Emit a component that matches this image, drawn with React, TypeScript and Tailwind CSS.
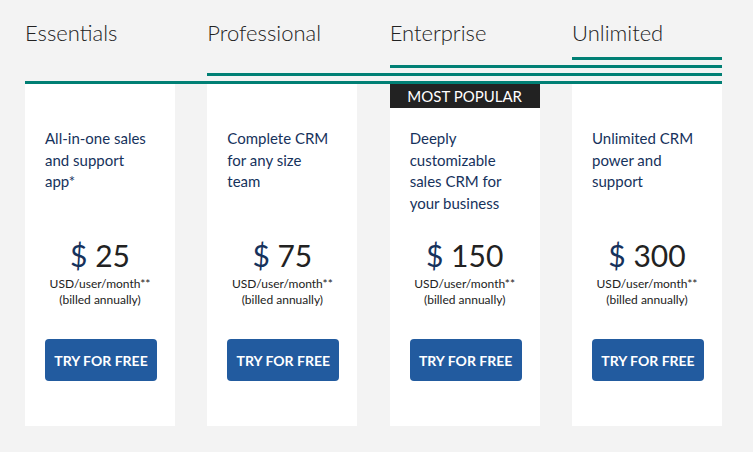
import React from "react";

const plans = [
    { name: "Essentials", lines: ["All-in-one sales", "and support", "app*"], price: "25" },
    { name: "Professional", lines: ["Complete CRM", "for any size", "team"], price: "75" },
    { name: "Enterprise", lines: ["Deeply", "customizable", "sales CRM for", "your business"], price: "150", popular: true },
    { name: "Unlimited", lines: ["Unlimited CRM", "power and", "support"], price: "300" },
];

const PlanCard = (props: any) => {
    const plan = props.plan;

    return (
        <div className="relative bg-white px-[20px] pt-[44px] pb-[45px]">
            {plan.popular && (
                <div className="absolute left-0 top-0 w-full h-[24px] bg-[#222222] text-white text-[15px] leading-[24px] text-center uppercase">
                    Most Popular
                </div>
            )}

            {/* Description */}
            <p className="h-[86px] text-[15px] leading-[21.5px] text-[#16325c] whitespace-nowrap">
                {plan.lines.map((line: string, index: number) => (
                    <React.Fragment key={index}>
                        {line}
                        {index < plan.lines.length - 1 && <br />}
                    </React.Fragment>
                ))}
            </p>

            {/* Price */}
            <div className="mt-[23px] text-center text-[30px] leading-[36px] text-[#222222]">
                <span className="text-[#16325c]">$</span> {plan.price}
            </div>
            <div className="mt-[3px] text-center text-[12px] leading-[16px] text-[#222222]">
                USD/user/month**
                <br />
                (billed annually)
            </div>

            <button className="mt-[31px] mx-auto flex items-center justify-center w-[112px] h-[42px] rounded-[4px] bg-[#225b9f] text-white text-[14px] font-bold">
                TRY FOR FREE
            </button>
        </div>
    );
};

const App = () => {
    return (
        <div className="min-h-screen w-full bg-[#f3f3f3] font-['Lato',sans-serif]">
            <div className="grid grid-cols-[repeat(4,150px)] gap-x-[32.33px] px-[25px]">
                {/* Plan names */}
                {plans.map((plan) => (
                    <div key={plan.name} className="h-[57px] pt-[19px] text-[22px] leading-[28px] font-light text-[#222222]">
                        {plan.name}
                    </div>
                ))}

                {/* Stacked rules, each one running to the right edge */}
                <div className="col-start-4 col-span-1 h-[3px] bg-[#007f74]" />
                <div className="col-start-3 col-span-2 h-[3px] mt-[5px] bg-[#007f74]" />
                <div className="col-start-2 col-span-3 h-[3px] mt-[5px] bg-[#007f74]" />
                <div className="col-start-1 col-span-4 h-[3px] mt-[5px] bg-[#007f74]" />

                {/* Cards */}
                {plans.map((plan) => (
                    <PlanCard key={plan.name} plan={plan} />
                ))}
            </div>
        </div>
    );
};

export default App;
